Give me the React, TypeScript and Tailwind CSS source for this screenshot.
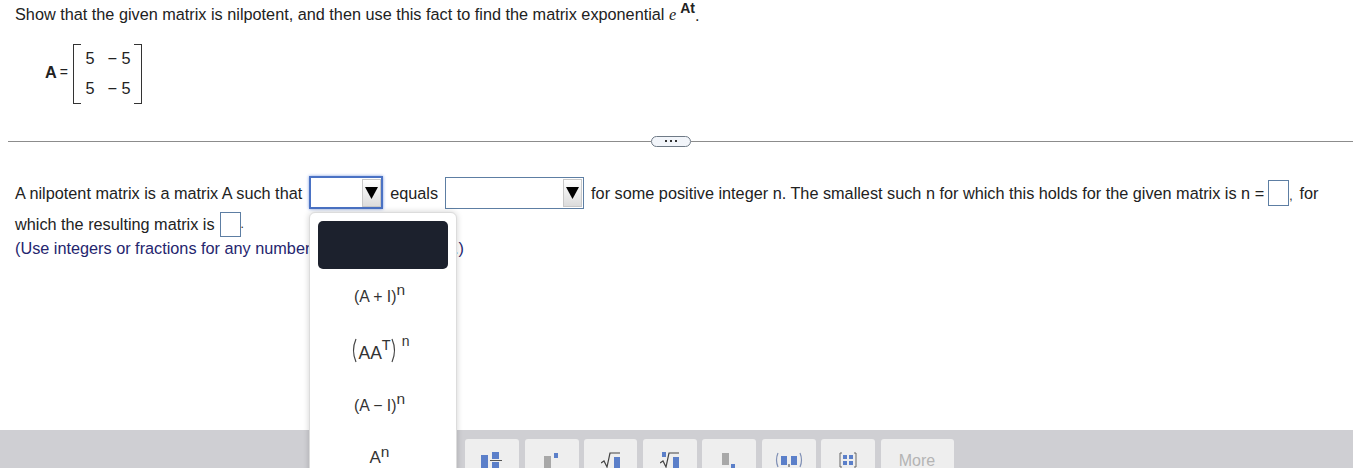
import React from "react";

const Arrow = () => (
  <span className="flex h-[28px] w-[19px] items-center justify-center bg-gradient-to-b from-[#ffffff] to-[#dcdcdc] border border-[#c8c8c8]">
    <svg width="13" height="12" viewBox="0 0 13 12"><path d="M0 0H13L6.5 12Z" fill="#000" /></svg>
  </span>
);

const Box = ({ cls }: { cls: string }) => <span className={"inline-block border border-[#5d7ea3] bg-white " + cls} />;

const Sup = ({ children, cls }: { children: React.ReactNode; cls: string }) => <span className={"relative " + cls}>{children}</span>;

const Tool = ({ w, children }: { w: string; children: React.ReactNode }) => (
  <div className={"flex h-[29px] justify-center overflow-hidden rounded-t-[3px] bg-[#eeeeee] pt-[13px] " + w}>{children}</div>
);

const B = "#5b7fc9";
const G = "#a8a8a8";

export default function App() {
  return (
    <div className="relative flex h-[468px] w-[1353px] flex-col overflow-hidden bg-white text-[16.25px] text-[#222222] [font-family:'Liberation_Sans',Arial,sans-serif]">
      <div className="pl-[15px] pt-[2px] leading-[24px]">
        Show that the given matrix is nilpotent, and then use this fact to find the matrix exponential{" "}
        <span className="[font-family:'Liberation_Serif',serif] italic">e</span>
        <span className="relative top-[-7px] ml-[4px] text-[14px] font-bold">At</span>
        <span className="relative top-[1px]">.</span>
      </div>

      <div className="mt-[17px] flex h-[60px] items-center pl-[45px]">
        <span className="relative top-[-2px] font-bold">A</span>
        <span className="relative top-[-2px] ml-[3px] text-[14px]">=</span>
        <div className="ml-[5px] h-[60px] w-[8px] border-y border-l border-[#333333]" />
        <div className="relative top-[-1px] grid h-[60px] w-[53px] grid-cols-[18px_35px] items-center text-center leading-[18px]">
          <span>5</span><span className="pl-[5px]">−&nbsp;5</span><span>5</span><span className="pl-[5px]">−&nbsp;5</span>
        </div>
        <div className="h-[60px] w-[8px] border-y border-r border-[#333333]" />
      </div>

      <div className="mt-[27px] flex h-[20px] items-center pl-[8px]">
        <div className="h-px w-[643px] bg-[#8c8c8c]" />
        <div className="flex h-[11px] w-[40px] items-center justify-center gap-[3px] rounded-[6px] border border-[#6f7a86] bg-[#f2f5fa]">
          <span className="h-[2px] w-[2px] bg-[#333333]" /><span className="h-[2px] w-[2px] bg-[#333333]" /><span className="h-[2px] w-[2px] bg-[#333333]" />
        </div>
        <div className="h-px flex-1 bg-[#8c8c8c]" />
      </div>

      <div className="mt-[25px] flex h-[33px] items-center whitespace-pre pl-[15px]">
        <span className="pt-[2px]">A nilpotent matrix is a matrix A such that</span>
        <div className="ml-[7px] flex h-[33px] w-[74px] items-center justify-end border-2 border-[#4a72c4] bg-white shadow-[0_0_3px_#7d9be0]"><Arrow /></div>
        <span className="ml-[7px] pt-[2px]">equals</span>
        <div className="ml-[7px] flex h-[32px] w-[139px] items-center justify-end border border-[#5d7ea3] bg-white pr-[1px]"><Arrow /></div>
        <span className="ml-[7px] pt-[2px]">for some positive integer n. The smallest such n for which this holds for the given matrix is n =</span>
        <Box cls="ml-[4px] h-[26px] w-[21px]" />
        <span className="relative top-[3px] text-[12px]">,</span>
        <span className="ml-[7px] pt-[2px]">for</span>
      </div>

      <div className="mt-[2px] flex h-[26px] items-center whitespace-pre pl-[15px]">
        <span>which the resulting matrix is</span>
        <Box cls="ml-[5px] h-[25px] w-[21px]" />
        <span className="text-[12px]">.</span>
      </div>

      <div className="flex h-[22px] items-center whitespace-pre pl-[15px] text-[#25256e]">
        <span>(Use integers or fractions for any numbers in the expressions.)</span>
      </div>

      <div className="mt-auto flex h-[38px] items-end gap-[5.5px] bg-[#cfcfd3] pl-[465px]">
        <Tool w="w-[54px]">
          <svg width="22" height="16" viewBox="0 0 22 16"><rect x="0" y="3" width="7" height="13" fill={B} /><rect x="11" y="0" width="7" height="7" fill={B} /><rect x="9" y="8" width="12" height="1" fill="#555" /><rect x="11" y="10" width="7" height="6" fill={B} /></svg>
        </Tool>
        <Tool w="w-[54px]">
          <svg width="16" height="16" viewBox="0 0 16 16"><rect x="0" y="4" width="7" height="12" fill={G} /><rect x="10" y="1" width="4" height="5" fill={B} /></svg>
        </Tool>
        <Tool w="w-[53px]">
          <svg width="20" height="16" viewBox="0 0 20 16"><path d="M0 11L3 9L6 15L9 1H19" fill="none" stroke="#444" strokeWidth="1.2" /><rect x="13" y="5" width="6" height="11" fill={B} /></svg>
        </Tool>
        <Tool w="w-[54px]">
          <svg width="20" height="16" viewBox="0 0 20 16"><rect x="2" y="0" width="4" height="5" fill={B} /><path d="M0 11L3 9L6 15L9 1H19" fill="none" stroke="#444" strokeWidth="1.2" /><rect x="13" y="5" width="6" height="11" fill={B} /></svg>
        </Tool>
        <Tool w="w-[54px]">
          <svg width="16" height="16" viewBox="0 0 16 16"><rect x="1" y="1" width="7" height="12" fill={G} /><rect x="10" y="12" width="4" height="4" fill={B} /></svg>
        </Tool>
        <Tool w="w-[54px]">
          <svg width="28" height="16" viewBox="0 0 28 16"><path d="M3 1Q0 8 3 15M25 1Q28 8 25 15" fill="none" stroke="#7f8fb5" strokeWidth="1.2" /><rect x="6" y="4" width="6" height="9" fill={B} /><rect x="16" y="4" width="6" height="9" fill={B} /><rect x="13.5" y="12" width="1" height="3" fill="#444" /></svg>
        </Tool>
        <Tool w="w-[54px]">
          <svg width="18" height="16" viewBox="0 0 18 16"><path d="M3 1H1V15H3M15 1H17V15H15" fill="none" stroke="#666" strokeWidth="1" /><rect x="4" y="3" width="4" height="4" fill={B} /><rect x="10" y="3" width="4" height="4" fill={B} /><rect x="4" y="9" width="4" height="4" fill={B} /><rect x="10" y="9" width="4" height="4" fill={B} /></svg>
        </Tool>
        <div className="flex h-[29px] w-[73px] justify-center overflow-hidden rounded-t-[3px] bg-[#eeeeee] pt-[12px] text-[16px] leading-[20px] text-[#b4b4b4]">More</div>
      </div>

      <div className="absolute left-[309px] top-[212px] h-[270px] w-[148px] rounded-t-[6px] border border-[#dcdcdc] bg-white px-[8px] pt-[8px] text-[#333333] shadow-[0_0_6px_rgba(0,0,0,0.18)]">
        <div className="h-[48px] rounded-[5px] bg-[#1c212d]" />
        <div className="mt-[12px] flex h-[32px] items-center justify-center pr-[7px] text-[15.8px]">
          <span>(A + I)</span><Sup cls="top-[-7px] text-[15.5px]">n</Sup>
        </div>
        <div className="mt-[15px] flex h-[44px] items-center justify-center pr-[6px]">
          <svg width="7" height="25" viewBox="0 0 7 25" className="mt-[1px]"><path d="M6 1Q1 12.5 6 24" fill="none" stroke="#444" strokeWidth="1.2" /></svg>
          <span className="relative top-[3px] ml-[1px] text-[17.5px]">AA</span>
          <Sup cls="top-[-4px] text-[14.5px]">T</Sup>
          <svg width="7" height="25" viewBox="0 0 7 25" className="mt-[1px]"><path d="M1 1Q6 12.5 1 24" fill="none" stroke="#444" strokeWidth="1.2" /></svg>
          <Sup cls="top-[-9px] ml-[4px] text-[14px]">n</Sup>
        </div>
        <div className="mt-[18px] flex h-[32px] items-center justify-center pr-[7px] text-[15.8px]">
          <span>(A − I)</span><Sup cls="top-[-7px] text-[15.5px]">n</Sup>
        </div>
        <div className="mt-[20px] flex h-[32px] items-center justify-center pr-[7px] text-[17px]">
          <span>A</span><Sup cls="top-[-6px] text-[15.5px]">n</Sup>
        </div>
      </div>
    </div>
  );
}
